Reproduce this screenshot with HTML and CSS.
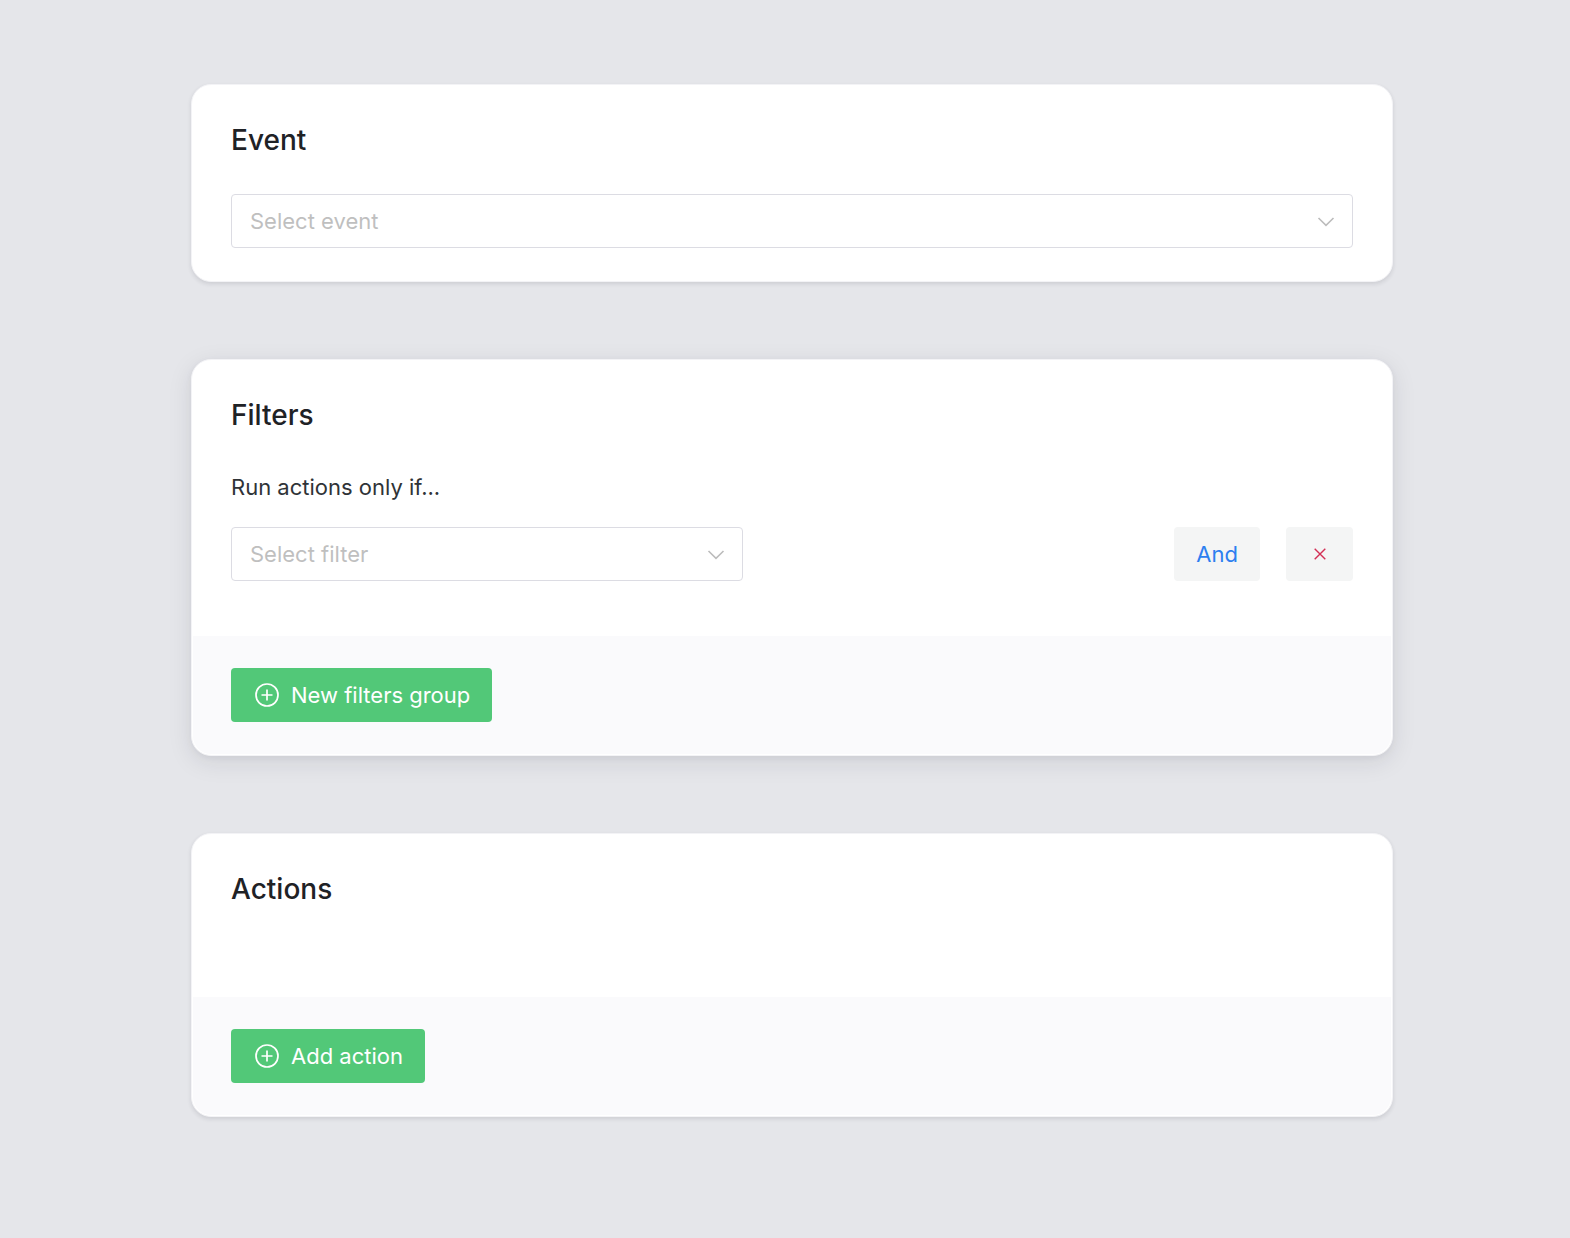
FILE: index.html
```html
<!DOCTYPE html>
<html lang="en">
<head>
<meta charset="utf-8">
<meta name="viewport" content="width=device-width, initial-scale=1">
<title>Automation</title>
<link rel="stylesheet" href="styles.css">
</head>
<body>
<main class="page">
  <section class="card">
    <div class="card-body">
      <h2 class="card-title" id="event-title">Event</h2>
      <div class="select">
        <select class="select-control" aria-labelledby="event-title">
          <option>Select event</option>
        </select>
        <svg class="select-arrow" viewBox="0 0 18 12" aria-hidden="true"><path d="M1.500 2 9 9.300 16.500 2"/></svg>
      </div>
    </div>
  </section>

  <section class="card card-raised">
    <div class="card-body card-body-filters">
      <h2 class="card-title">Filters</h2>
      <label class="hint" for="filter">Run actions only if...</label>
      <div class="filter-row">
        <div class="select select-filter">
          <select class="select-control" id="filter">
            <option>Select filter</option>
          </select>
          <svg class="select-arrow" viewBox="0 0 18 12" aria-hidden="true"><path d="M1.500 2 9 9.300 16.500 2"/></svg>
        </div>
        <div class="filter-actions">
          <button class="button button-and" type="button">And</button>
          <button class="button button-remove" type="button" aria-label="Remove filter">
            <svg class="cross" viewBox="0 0 12 12" aria-hidden="true"><path d="M.7.7 11.300 11.300M11.300.7.7 11.300"/></svg>
          </button>
        </div>
      </div>
    </div>
    <footer class="card-footer">
      <button class="button button-add" type="button">
        <svg class="plus" viewBox="0 0 24 24" aria-hidden="true"><circle cx="12" cy="12" r="11"/><path d="M12 6.500v11M6.500 12h11"/></svg>
        New filters group
      </button>
    </footer>
  </section>

  <section class="card">
    <div class="card-body card-body-empty">
      <h2 class="card-title">Actions</h2>
    </div>
    <footer class="card-footer">
      <button class="button button-add" type="button">
        <svg class="plus" viewBox="0 0 24 24" aria-hidden="true"><circle cx="12" cy="12" r="11"/><path d="M12 6.500v11M6.500 12h11"/></svg>
        Add action
      </button>
    </footer>
  </section>
</main>
</body>
</html>
```
FILE: styles.css
```css
* {
  box-sizing: border-box;
}

body {
  margin: 0;
  background: #e5e6ea;
  color: #2f3337;
  font: 400 22px/32px Inter, "Liberation Sans", sans-serif;
}

.page {
  display: flex;
  flex-direction: column;
  gap: 77px;
  padding: 84px 177px 84px 191px;
}

.card {
  padding: 1px;
  border: 1px solid #f3f3f6;
  border-radius: 20px;
  background: #fff;
  box-shadow: 0 2px 4px rgba(30, 30, 50, 0.12);
}

.card-raised {
  box-shadow: 0 6px 24px rgba(30, 30, 50, 0.1), 0 2px 6px rgba(30, 30, 50, 0.05);
}

.card-body {
  padding: 36px 38px 32px;
}

.card-body-filters {
  padding-bottom: 55px;
}

.card-body-empty {
  padding-bottom: 54px;
}

.card-title {
  margin: 0 0 36px;
  color: #1f2226;
  font-size: 28px;
  font-weight: 500;
  line-height: 36px;
}

.hint {
  display: block;
  margin: 38px 0 24px;
  line-height: 32px;
}

.select {
  position: relative;
}

.select-filter {
  flex: 0 1 512px;
}

.select-control {
  display: block;
  width: 100%;
  height: 54px;
  padding: 0 52px 0 18px;
  appearance: none;
  border: 1px solid #dcdce3;
  border-radius: 4px;
  background: #fff;
  color: #bfbfbf;
  font: inherit;
}

.select-arrow {
  position: absolute;
  top: 22px;
  right: 18px;
  width: 18px;
  height: 12px;
  fill: none;
  stroke: #bcbcbc;
  stroke-width: 1.6;
  pointer-events: none;
}

.filter-row {
  display: flex;
  justify-content: space-between;
  gap: 26px;
}

.filter-actions {
  display: flex;
  gap: 26px;
}

.button {
  display: flex;
  align-items: center;
  justify-content: center;
  height: 54px;
  padding: 0 22px;
  border: 0;
  border-radius: 4px;
  background: #f4f5f5;
  font: inherit;
}

.button-and {
  color: #2d7ff0;
}

.button-remove {
  width: 67px;
}

.cross {
  width: 12px;
  height: 12px;
  fill: none;
  stroke: #d32f55;
  stroke-width: 1.4;
}

.card-footer {
  padding: 32px 38px;
  border-radius: 0 0 18px 18px;
  background: #fafafc;
}

.button-add {
  gap: 12px;
  padding: 0 22px 0 24px;
  background: #52c878;
  color: #fff;
}

.plus {
  width: 24px;
  height: 24px;
  fill: none;
  stroke: currentColor;
  stroke-width: 1.7;
}
```
